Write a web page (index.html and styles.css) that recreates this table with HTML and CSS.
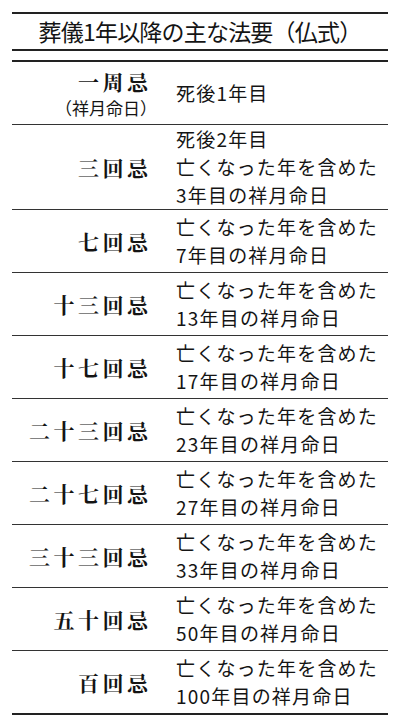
FILE: index.html
```html
<!DOCTYPE html>
<html lang="ja">
<head>
<meta charset="utf-8">
<link rel="stylesheet" href="styles.css">
</head>
<body>
<div class="sheet">
  <h1 class="title">葬儀1年以降の主な法要（仏式）</h1>
  <div class="table">
    <div class="row">
      <div class="name"><span class="main">一周忌</span><span class="sub">（祥月命日）</span></div>
      <div class="desc">死後1年目</div>
    </div>
    <div class="row three">
      <div class="name"><span class="main">三回忌</span></div>
      <div class="desc">死後2年目<br>亡くなった年を含めた<br>3年目の祥月命日</div>
    </div>
    <div class="row">
      <div class="name"><span class="main">七回忌</span></div>
      <div class="desc">亡くなった年を含めた<br>7年目の祥月命日</div>
    </div>
    <div class="row">
      <div class="name"><span class="main">十三回忌</span></div>
      <div class="desc">亡くなった年を含めた<br>13年目の祥月命日</div>
    </div>
    <div class="row">
      <div class="name"><span class="main">十七回忌</span></div>
      <div class="desc">亡くなった年を含めた<br>17年目の祥月命日</div>
    </div>
    <div class="row">
      <div class="name"><span class="main">二十三回忌</span></div>
      <div class="desc">亡くなった年を含めた<br>23年目の祥月命日</div>
    </div>
    <div class="row">
      <div class="name"><span class="main">二十七回忌</span></div>
      <div class="desc">亡くなった年を含めた<br>27年目の祥月命日</div>
    </div>
    <div class="row">
      <div class="name"><span class="main">三十三回忌</span></div>
      <div class="desc">亡くなった年を含めた<br>33年目の祥月命日</div>
    </div>
    <div class="row">
      <div class="name"><span class="main">五十回忌</span></div>
      <div class="desc">亡くなった年を含めた<br>50年目の祥月命日</div>
    </div>
    <div class="row last">
      <div class="name"><span class="main">百回忌</span></div>
      <div class="desc">亡くなった年を含めた<br>100年目の祥月命日</div>
    </div>
  </div>
</div>
</body>
</html>
```
FILE: styles.css
```css
html, body {
  margin: 0;
  padding: 0;
  background: #ffffff;
}
body {
  font-family: "Noto Sans CJK JP", "Noto Sans", sans-serif;
  color: #141414;
}
.sheet {
  padding: 12px 12px 0 12px;
}
.title {
  margin: 0;
  border-top: 2px solid #222;
  border-bottom: 2px solid #222;
  height: 35px;
  font-size: 23px;
  font-weight: 400;
  line-height: 35px;
  text-align: center;
  letter-spacing: -0.8px;
}
.table {
  margin-top: 9px;
  border-top: 2px solid #222;
  border-bottom: 2px solid #222;
}
.row {
  display: grid;
  grid-template-columns: 140px 1fr;
  column-gap: 24px;
  align-items: center;
  padding: 3px 0;
  border-bottom: 1px solid #333;
  min-height: 56px;
}
.row.three {
  padding: 0;
}
.row.last {
  border-bottom: none;
}
.name {
  display: flex;
  flex-direction: column;
  align-items: flex-end;
  text-align: right;
  padding-right: 4px;
}
.main {
  font-family: "Noto Serif CJK JP", "Noto Sans CJK JP", serif;
  font-weight: 700;
  font-size: 21px;
  letter-spacing: 3.5px;
  margin-right: -3.5px;
  line-height: 30px;
}
.sub {
  font-size: 17px;
  line-height: 24px;
  margin-right: -9px;
}
.desc {
  font-size: 19px;
  letter-spacing: 1.2px;
  line-height: 28px;
}
```
